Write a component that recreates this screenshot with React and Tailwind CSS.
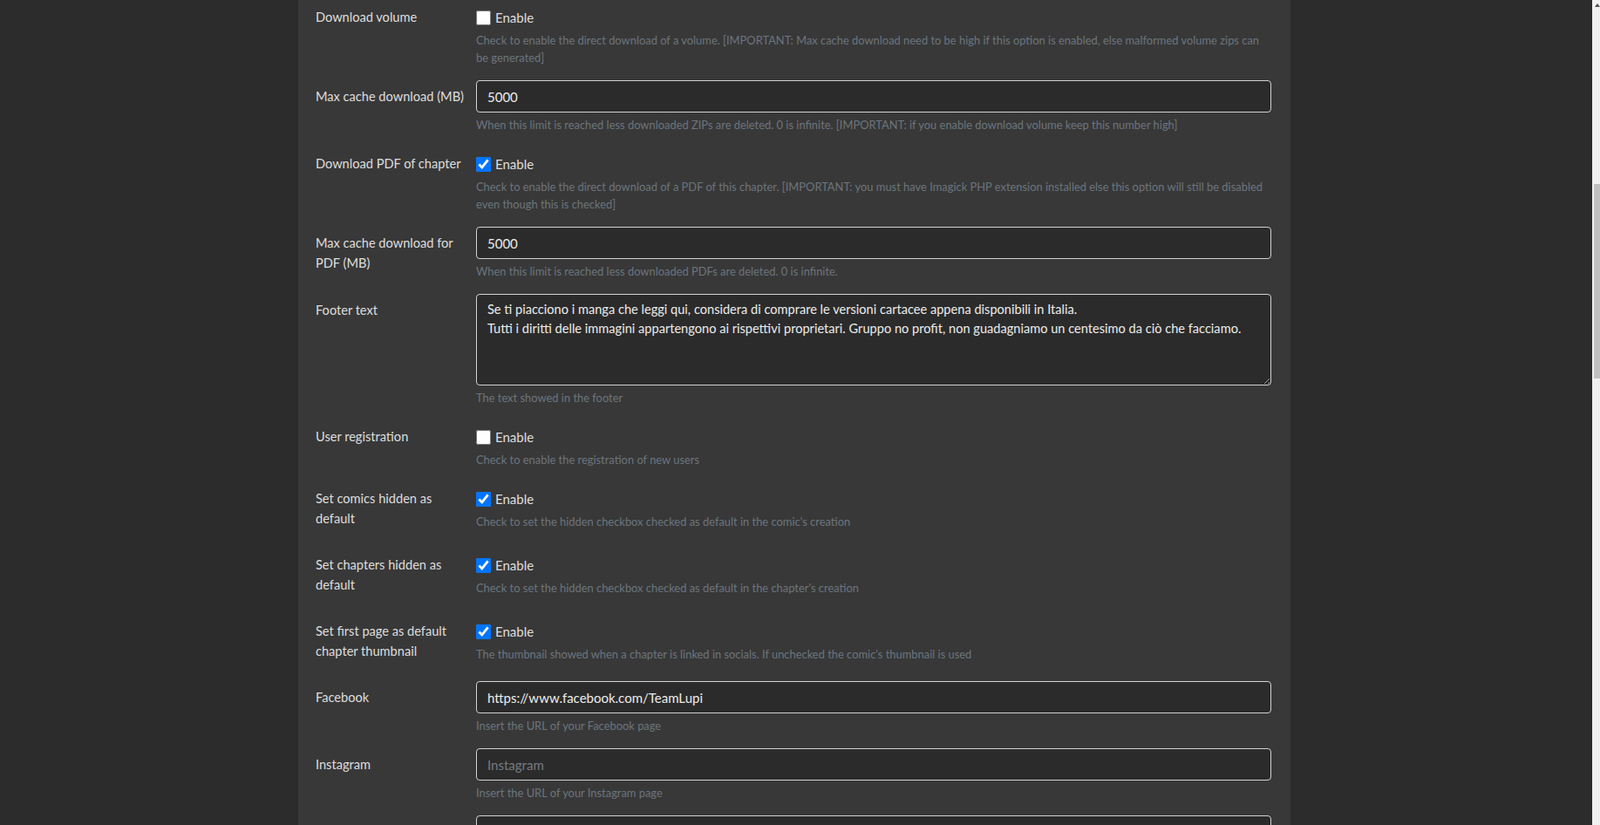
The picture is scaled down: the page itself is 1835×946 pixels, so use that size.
import { useState } from 'react'

const font = { fontFamily: 'Lato, "Liberation Sans", sans-serif' }

function Help({ children }) {
  return <div className="mt-1 text-[12.9px] leading-[20px] text-[#6c757d]">{children}</div>
}

function Label({ children }) {
  return (
    <div className="w-[184px] shrink-0 py-[7px] text-[14.6px] leading-[23px] text-[#dedede] whitespace-nowrap">
      {children}
    </div>
  )
}

function CheckRow({ label, checked, help }) {
  const [on, setOn] = useState(checked)
  return (
    <div className="flex mb-4">
      <Label>{label}</Label>
      <div className="flex-1 pt-[7px]">
        <label className="flex items-center h-[24px] gap-[5px] text-[15px] text-[#dedede]">
          <input
            type="checkbox"
            checked={on}
            onChange={(e) => setOn(e.target.checked)}
            className="w-[17px] h-[17px] m-0 accent-[#0075ff]"
          />
          Enable
        </label>
        <Help>{help}</Help>
      </div>
    </div>
  )
}

function InputRow({ label, value, placeholder, help }) {
  const [val, setVal] = useState(value || '')
  return (
    <div className="flex mb-4">
      <Label>{label}</Label>
      <div className="flex-1">
        <input
          type="text"
          value={val}
          placeholder={placeholder}
          onChange={(e) => setVal(e.target.value)}
          className="block w-full h-[37px] px-3 rounded-[4px] border border-[#d2d2d2] bg-[#2b2b2b] text-[15px] text-[#ececec] placeholder:text-[#767a80] outline-none"
        />
        {help && <Help>{help}</Help>}
      </div>
    </div>
  )
}

export default function App() {
  const [footer, setFooter] = useState(
    'Se ti piacciono i manga che leggi qui, considera di comprare le versioni cartacee appena disponibili in Italia.\nTutti i diritti delle immagini appartengono ai rispettivi proprietari. Gruppo no profit, non guadagniamo un centesimo da ciò che facciamo.'
  )

  return (
    <div className="flex h-[946px] overflow-hidden bg-[#2c2c2c]" style={font}>
      <div className="flex-1 pr-1">
        <div className="w-[1138px] h-full mx-auto bg-[#383838] pl-[20px] pr-[22px] pt-[1px]">
          <CheckRow
            label="Download volume"
            checked={false}
            help={
              <>
                Check to enable the direct download of a volume. [IMPORTANT: Max cache download need to be high if this option is enabled, else malformed volume zips can
                <br />
                be generated]
              </>
            }
          />
          <InputRow
            label="Max cache download (MB)"
            value="5000"
            help="When this limit is reached less downloaded ZIPs are deleted. 0 is infinite. [IMPORTANT: if you enable download volume keep this number high]"
          />
          <CheckRow
            label="Download PDF of chapter"
            checked={true}
            help={
              <>
                Check to enable the direct download of a PDF of this chapter. [IMPORTANT: you must have Imagick PHP extension installed else this option will still be disabled
                <br />
                even though this is checked]
              </>
            }
          />
          <InputRow
            label={<>Max cache download for<br />PDF (MB)</>}
            value="5000"
            help="When this limit is reached less downloaded PDFs are deleted. 0 is infinite."
          />

          {/* Footer text */}
          <div className="flex mb-4">
            <Label>Footer text</Label>
            <div className="flex-1">
              <textarea
                value={footer}
                onChange={(e) => setFooter(e.target.value)}
                className="block w-full h-[105px] px-3 py-[6px] rounded-[4px] border border-[#d2d2d2] bg-[#2b2b2b] text-[14.6px] leading-[21.6px] text-[#ececec] outline-none"
              />
              <Help>The text showed in the footer</Help>
            </div>
          </div>

          <CheckRow label="User registration" checked={false} help="Check to enable the registration of new users" />
          <CheckRow
            label={<>Set comics hidden as<br />default</>}
            checked={true}
            help="Check to set the hidden checkbox checked as default in the comic's creation"
          />
          <CheckRow
            label={<>Set chapters hidden as<br />default</>}
            checked={true}
            help="Check to set the hidden checkbox checked as default in the chapter's creation"
          />
          <CheckRow
            label={<>Set first page as default<br />chapter thumbnail</>}
            checked={true}
            help="The thumbnail showed when a chapter is linked in socials. If unchecked the comic's thumbnail is used"
          />
          <InputRow label="Facebook" value="https://www.facebook.com/TeamLupi" help="Insert the URL of your Facebook page" />
          <InputRow label="Instagram" placeholder="Instagram" help="Insert the URL of your Instagram page" />
          <InputRow label="" />
        </div>
      </div>

      {/* scrollbar */}
      <div className="w-[9px] shrink-0 bg-[#f1f1f1] flex flex-col items-end">
        <svg width="6" height="4" viewBox="0 0 6 4" className="mt-[4px]">
          <path d="M0 4 L3 0 L6 4 Z" fill="#505050" />
        </svg>
        <div className="mt-[203px] w-[7px] h-[223px] bg-[#c1c1c1]" />
      </div>
    </div>
  )
}
